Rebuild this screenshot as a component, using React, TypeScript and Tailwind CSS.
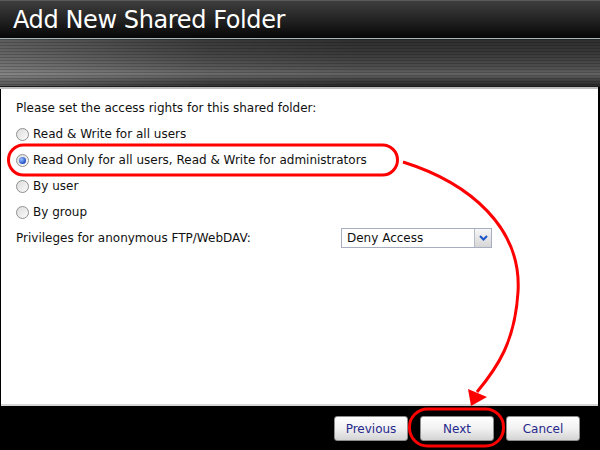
import React from 'react';

const font = { fontFamily: '"DejaVu Sans", Verdana, sans-serif' };

const Radio: React.FC<{ checked?: boolean; label: string }> = ({ checked, label }) => (
  <label className="flex items-center h-[26px] text-[12px] text-[#111]">
    <span className="relative w-[13px] h-[13px] rounded-full border border-[#8e8f8f] bg-gradient-to-br from-[#dcdcdc] to-[#fbfbfb] flex items-center justify-center">
      {checked && (
        <span className="w-[7px] h-[7px] rounded-full bg-[radial-gradient(circle_at_35%_35%,#9cc0ff,#1d4fc6_70%,#0c2f86)]" />
      )}
    </span>
    <span className="ml-[4px]">{label}</span>
  </label>
);

const Button: React.FC<{ label: string }> = ({ label }) => (
  <button className="w-[74px] h-[25px] rounded-[3px] border border-[#8d8d8d] bg-gradient-to-b from-[#ffffff] via-[#f1f1f1] to-[#d4d4d4] text-[12px] text-[#27288c]">
    {label}
  </button>
);

export default function App() {
  return (
    <div className="relative w-[600px] h-[450px] bg-black flex flex-col overflow-hidden" style={font}>
      {/* title bar */}
      <div className="h-[38px] border-t border-[#5a5a5a] bg-[linear-gradient(to_bottom,#3e3e3e,#202020_55%,#060606)] flex items-center pl-[13px]">
        <span className="text-[24px] leading-none text-white tracking-[-0.4px] mt-[1px]">
          Add New Shared Folder
        </span>
      </div>
      <div className="h-px bg-[#a7b6b6]" />
      {/* streaked band */}
      <div className="h-[47px] bg-[repeating-linear-gradient(to_bottom,rgba(0,0,0,0.18)_0px,rgba(0,0,0,0.18)_1px,transparent_1px,transparent_3px),linear-gradient(to_right,rgba(255,255,255,0.22),rgba(255,255,255,0.05)_35%,transparent_60%),linear-gradient(to_bottom,#2e2e2e_0%,#383838_30%,#4e4e4e_60%,#636363_75%,#3e3e3e_88%,#282828_100%)]" />
      <div className="h-px bg-[#1c1c1c]" />
      <div className="h-[2px] bg-[#bdbdbd] mr-[2px]" />
      {/* content */}
      <div className="flex-1 bg-white ml-px mr-[2px] pt-[6px] pl-[15px] text-[12px] text-[#111]">
        <div className="h-[26px] flex items-center">Please set the access rights for this shared folder:</div>
        <Radio label="Read & Write for all users" />
        <Radio checked label="Read Only for all users, Read & Write for administrators" />
        <Radio label="By user" />
        <Radio label="By group" />
        <div className="h-[26px] flex items-center">
          <span className="w-[325px]">Privileges for anonymous FTP/WebDAV:</span>
          <div className="flex h-[20px] w-[151px] border border-[#a6aebf] bg-white">
            <span className="flex-1 flex items-center pl-[5px] text-[12px]">Deny Access</span>
            <span className="w-[17px] border-l border-[#b6bcc6] bg-gradient-to-b from-[#f6f6f6] to-[#d6d6d6] flex items-center justify-center">
              <svg width="9" height="6" viewBox="0 0 9 6">
                <path d="M1 1 L4.5 4.5 L8 1" fill="none" stroke="#1b55c9" strokeWidth="2" />
              </svg>
            </span>
          </div>
        </div>
      </div>
      <div className="h-[2px] bg-[#d6d6d6] ml-px mr-[2px]" />
      {/* footer */}
      <div className="h-[44px] flex justify-end items-start pt-[10px] pr-[20px] gap-[12px]">
        <Button label="Previous" />
        <Button label="Next" />
        <Button label="Cancel" />
      </div>

      {/* red annotations */}
      <svg className="absolute inset-0 pointer-events-none" width="600" height="450" viewBox="0 0 600 450">
        <rect x="8.5" y="145" width="389" height="30" rx="15" fill="none" stroke="#f00" strokeWidth="3" />
        <path d="M403 162 C 470 183, 522 228, 518 292 C 515 342, 497 368, 477 392" fill="none" stroke="#f00" strokeWidth="3" />
        <polygon points="471,406 468,389 487,397" fill="#f00" />
        <rect x="409.5" y="409" width="94" height="37" rx="18" fill="none" stroke="#f00" strokeWidth="3" />
      </svg>
    </div>
  );
}
